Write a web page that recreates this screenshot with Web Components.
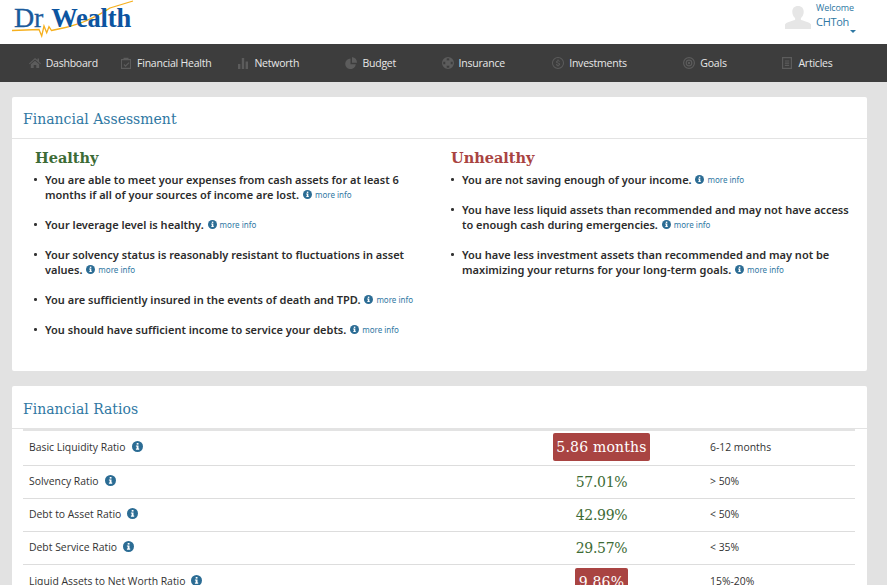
<!DOCTYPE html>
<html>
<head>
<meta charset="utf-8">
<title>Dr Wealth</title>
<style>
    html, body { margin: 0; height: 585px; overflow: hidden; background: #e2e2e2; }
    body { font-family: "Open Sans", "Noto Sans", sans-serif; color: #333; }
</style>
</head>
<body>
<dw-header></dw-header>
<dw-nav>
    <dw-nav-item icon="home">Dashboard</dw-nav-item>
    <dw-nav-item icon="clipboard">Financial Health</dw-nav-item>
    <dw-nav-item icon="bars">Networth</dw-nav-item>
    <dw-nav-item icon="pie">Budget</dw-nav-item>
    <dw-nav-item icon="lifebuoy">Insurance</dw-nav-item>
    <dw-nav-item icon="dollar">Investments</dw-nav-item>
    <dw-nav-item icon="target">Goals</dw-nav-item>
    <dw-nav-item icon="article">Articles</dw-nav-item>
</dw-nav>
<dw-page>
    <dw-card>
        <span slot="title">Financial Assessment</span>
        <dw-assessment>
            <dw-note-list heading="Healthy" tone="good">
                <dw-note>You are able to meet your expenses from cash assets for at least 6 months if all of your sources of income are lost.</dw-note>
                <dw-note>Your leverage level is healthy.</dw-note>
                <dw-note>Your solvency status is reasonably resistant to fluctuations in asset values.</dw-note>
                <dw-note>You are sufficiently insured in the events of death and TPD.</dw-note>
                <dw-note>You should have sufficient income to service your debts.</dw-note>
            </dw-note-list>
            <dw-note-list heading="Unhealthy" tone="bad">
                <dw-note>You are not saving enough of your income.</dw-note>
                <dw-note>You have less liquid assets than recommended and may not have access to enough cash during emergencies.</dw-note>
                <dw-note>You have less investment assets than recommended and may not be maximizing your returns for your long-term goals.</dw-note>
            </dw-note-list>
        </dw-assessment>
    </dw-card>
    <dw-card roomy>
        <span slot="title">Financial Ratios</span>
        <dw-ratio-table>
            <dw-ratio name="Basic Liquidity Ratio" value="5.86 months" range="6-12 months" bad></dw-ratio>
            <dw-ratio name="Solvency Ratio" value="57.01%" range="&gt; 50%"></dw-ratio>
            <dw-ratio name="Debt to Asset Ratio" value="42.99%" range="&lt; 50%"></dw-ratio>
            <dw-ratio name="Debt Service Ratio" value="29.57%" range="&lt; 35%"></dw-ratio>
            <dw-ratio name="Liquid Assets to Net Worth Ratio" value="9.86%" range="15%-20%" bad></dw-ratio>
        </dw-ratio-table>
    </dw-card>
</dw-page>

<script>
const infoIcon = size => `
    <svg width="${size}" height="${size}" viewBox="0 0 11 11" style="display:block">
        <circle cx="5.5" cy="5.5" r="5.5" fill="#2b6c94"/>
        <rect x="4.7" y="2" width="1.8" height="1.6" fill="#fff"/>
        <path d="M3.9 4.4h2.6v3.2h.7v1.1H3.9V7.6h.8V5.5h-.8z" fill="#fff"/>
    </svg>`;

const NAV_ICONS = {
    home: `<path d="M6 1 0 6.4l.7.8L6 2.6l5.300 4.600.7-.8-2-1.800V1.500H8.500v1.400zM1.800 7.300 6 3.700l4.200 3.600V11H7.300V8H4.700v3H1.800z"/>`,
    clipboard: `<path fill-rule="evenodd" d="M1 2h2.500V.8h5V2H11v10H1zm1 1.200v7.600h8V3.200zM8.700 5.300l.8.700-4 3.900-2-2 .8-.8 1.200 1.200z"/>`,
    bars: `<path d="M1 7h2.400v5H1zM4.800 1h2.400v11H4.800zM8.600 4.500H11V12H8.600z"/>`,
    pie: `<path d="M5.500 1.500a5.300 5.300 0 1 0 5.300 5.700H5.500z"/><path d="M7 0v5.700h5A6 6 0 0 0 7 0z"/>`,
    lifebuoy: `<path fill-rule="evenodd" d="M6 0a6 6 0 1 1 0 12A6 6 0 0 1 6 0zM4.700 1.400v2.100a2.800 2.800 0 0 1 2.600 0V1.400a4.800 4.800 0 0 0-2.600 0zM1.400 4.700a4.800 4.800 0 0 0 0 2.600h2.100a2.800 2.800 0 0 1 0-2.600zm7.100 0a2.800 2.800 0 0 1 0 2.600h2.100a4.800 4.800 0 0 0 0-2.600zM4.700 8.500v2.100a4.800 4.800 0 0 0 2.600 0V8.500a2.800 2.800 0 0 1-2.600 0z"/>`,
    dollar: `<path fill-rule="evenodd" d="M6 0a6 6 0 1 1 0 12A6 6 0 0 1 6 0zm0 1a5 5 0 1 0 0 10A5 5 0 0 0 6 1z"/><path d="M5.500 2.500h1v.9c.7.100 1.200.4 1.500.8l-.7.600c-.3-.4-.7-.5-1.200-.5-.6 0-.9.200-.9.600 0 .9 2.900.5 2.900 2.300 0 .8-.6 1.300-1.600 1.500v.9h-1v-.9c-.8-.1-1.400-.5-1.700-1l.8-.6c.3.500.8.700 1.400.7s1-.2 1-.6c0-1-2.900-.5-2.900-2.300 0-.8.600-1.300 1.400-1.500z"/>`,
    target: `<path fill-rule="evenodd" d="M6 0a6 6 0 1 1 0 12A6 6 0 0 1 6 0zm0 1.200a4.800 4.800 0 1 0 0 9.600 4.800 4.800 0 0 0 0-9.600zM6 2.600a3.400 3.400 0 1 1 0 6.800 3.400 3.400 0 0 1 0-6.800zm0 1.200a2.200 2.200 0 1 0 0 4.400 2.200 2.200 0 0 0 0-4.400zM6 4.800a1.200 1.200 0 1 1 0 2.400 1.200 1.200 0 0 1 0-2.400z"/>`,
    article: `<path fill-rule="evenodd" d="M1 0h10v12H1zm1.200 1.200v9.600h7.600V1.200zM3.800 3.400h4.400v1.200H3.800zm0 2.200h4.400v1.200H3.800zm0 2.200h4.400V9H3.800z"/>`
};

class DwHeader extends HTMLElement {
    constructor() {
        super();
        this.root = this.attachShadow({mode: 'open'});
    }
    connectedCallback() {
        this.root.innerHTML = `
            <style>
                :host { display: flex; justify-content: space-between; height: 44px; background: #fff; overflow: hidden; }
                .logo { position: relative; margin-left: 14px; width: 122px; height: 44px; }
                .brand { position: relative; display: block; padding-top: 4px; font: bold 26.5px/28px "Liberation Serif", serif; color: #0c54a0; white-space: nowrap; letter-spacing: -0.2px; }
                .brand b { font-weight: normal; font-size: 28px; color: #1a5a9c; margin-right: 8px; -webkit-text-stroke: 0.3px #1a5a9c; }
                svg.swoosh { position: absolute; left: -14px; top: 0; }
                .user { display: flex; margin-right: 32px; }
                .avatar { margin: 6px 5px 0 0; }
                .who { color: #2f78a3; padding-top: 2px; width: 39px; }
                .welcome { font-size: 9px; line-height: 12px; letter-spacing: -0.1px; }
                .name { font-size: 11px; line-height: 14px; margin-top: 1px; letter-spacing: -0.3px; }
                .caret { width: 0; margin: 1px 0 0 34px; border: 3px solid transparent; border-top: 3px solid #2f78a3; border-bottom: 0; }
            </style>
            <div class="logo">
                <svg class="swoosh" width="136" height="38" viewBox="0 0 136 38">
                    <path d="M12 30.500 39 29.500l2.700 6.500L44 26l2.700 6.700L49 26.700l2.500 3.800Q85 25 110 8l23-7" fill="none" stroke="#f6b01e" stroke-width="1.300"/>
                </svg>
                <span class="brand"><b>Dr</b>Wealth</span>
            </div>
            <div class="user">
                <svg class="avatar" width="26" height="23" viewBox="0 0 25 25" preserveAspectRatio="none">
                    <path d="M12.500 0c3.600 0 5.500 2.600 5.500 6.300 0 3-1.200 5.500-2.700 6.800v2.200c3 1 8 2.200 9.700 4.800V25H0v-4.900c1.700-2.600 6.700-3.800 9.700-4.800v-2.200C8.200 11.800 7 9.300 7 6.300 7 2.600 8.900 0 12.500 0z" fill="#e6e6e6"/>
                </svg>
                <div class="who">
                    <div class="welcome">Welcome</div>
                    <div class="name">CHToh</div>
                    <div class="caret"></div>
                </div>
            </div>
        `;
    }
}

class DwNav extends HTMLElement {
    constructor() {
        super();
        this.root = this.attachShadow({mode: 'open'});
    }
    connectedCallback() {
        this.root.innerHTML = `
            <style>
                :host {
                    display: grid; height: 38px; padding-left: 12px; background: #3d3d3d;
                    grid-template-columns: repeat(5, 102.5px) 130px 101px 103px;
                }
            </style>
            <slot></slot>
        `;
    }
}

class DwNavItem extends HTMLElement {
    constructor() {
        super();
        this.root = this.attachShadow({mode: 'open'});
    }
    connectedCallback() {
        this.root.innerHTML = `
            <style>
                :host { display: flex; align-items: center; justify-content: center; gap: 5px; padding-bottom: 1px; font-size: 10.5px; letter-spacing: -0.22px; color: #e8e8e8; white-space: nowrap; }
                svg { fill: #5c5c5c; }
            </style>
            <svg width="12" height="12" viewBox="0 0 12 12">${NAV_ICONS[this.getAttribute('icon')]}</svg>
            <slot></slot>
        `;
    }
}

class DwPage extends HTMLElement {
    constructor() {
        super();
        this.root = this.attachShadow({mode: 'open'});
    }
    connectedCallback() {
        this.root.innerHTML = `
            <style>
                :host { display: flex; flex-direction: column; gap: 15px; padding: 15px 20px 0 12px; }
            </style>
            <slot></slot>
        `;
    }
}

class DwCard extends HTMLElement {
    constructor() {
        super();
        this.root = this.attachShadow({mode: 'open'});
    }
    connectedCallback() {
        this.root.innerHTML = `
            <style>
                :host { display: block; background: #fff; border-radius: 2px; }
                header {
                    height: 41px; padding-left: 11px; border-bottom: 1px solid #e3e3e3;
                    font: 14px/45px "DejaVu Serif", serif; color: #2f78a3;
                }
                :host([roomy]) header { height: 42px; line-height: 47px; }
            </style>
            <header><slot name="title"></slot></header>
            <slot></slot>
        `;
    }
}

class DwAssessment extends HTMLElement {
    constructor() {
        super();
        this.root = this.attachShadow({mode: 'open'});
    }
    connectedCallback() {
        this.root.innerHTML = `
            <style>
                :host { display: grid; grid-template-columns: 416px 416px; height: 232px; padding: 0 11px; }
            </style>
            <slot></slot>
        `;
    }
}

class DwNoteList extends HTMLElement {
    constructor() {
        super();
        this.root = this.attachShadow({mode: 'open'});
    }
    connectedCallback() {
        const colour = this.getAttribute('tone') == 'good' ? '#3d6b35' : '#a94442';
        this.root.innerHTML = `
            <style>
                :host { display: block; padding: 9px 0 0 12px; }
                :host([tone=good]) ::slotted(dw-note) { margin-left: -1px; }
                h3 { margin: 0 0 4px; font: bold 14.5px/20px "DejaVu Serif", serif; color: ${colour}; }
                .notes { display: flex; flex-direction: column; gap: 15px; }
            </style>
            <h3>${this.getAttribute('heading')}</h3>
            <div class="notes"><slot></slot></div>
        `;
    }
}

class DwNote extends HTMLElement {
    constructor() {
        super();
        this.root = this.attachShadow({mode: 'open'});
    }
    connectedCallback() {
        this.root.innerHTML = `
            <style>
                :host {
                    display: flex; gap: 8.5px;
                    font: 600 11px/15px "Noto Sans", sans-serif; color: #2c2c2c;
                }
                .bullet { flex: none; width: 2.5px; height: 2.5px; margin-top: 6px; border-radius: 50%; background: #333; }
                .icon { display: inline-block; line-height: 0; vertical-align: 0; margin: 0 3px 0 1px; }
                .more { font-size: 8px; line-height: 1; font-weight: 400; color: #2f78a3; position: relative; top: -1px; }
            </style>
            <span class="bullet"></span>
            <span><slot></slot> <span class="icon">${infoIcon(9)}</span><span class="more">more info</span></span>
        `;
    }
}

class DwRatioTable extends HTMLElement {
    constructor() {
        super();
        this.root = this.attachShadow({mode: 'open'});
    }
    connectedCallback() {
        this.root.innerHTML = `
            <style>
                :host { display: block; margin: 0 12px 0 11px; border-top: 2px solid #e3e3e3; }
            </style>
            <slot></slot>
        `;
    }
}

class DwRatio extends HTMLElement {
    constructor() {
        super();
        this.root = this.attachShadow({mode: 'open'});
    }
    connectedCallback() {
        const bad = this.hasAttribute('bad');
        this.root.innerHTML = `
            <style>
                :host {
                    display: grid; grid-template-columns: 476px 205px 151px; align-items: center;
                    height: 32px; border-bottom: 1px solid #ddd; font-size: 10.4px; color: #333;
                }
                :host([bad]) { height: 34px; }
                :host(:first-child) .value { margin-top: -2px; }
                .name { display: flex; align-items: center; gap: 6px; padding-left: 6px; margin-top: -2px; }
                .name svg { margin-top: -2px; }
                .value { justify-self: center; font: 14px/28px "DejaVu Serif", serif; letter-spacing: -0.3px; color: #3d6b35; white-space: nowrap; }
                .value.bad { padding: 0 3.5px; border-radius: 2px; background: #a94442; color: #fff; letter-spacing: 0.2px; }
                .range { padding-left: 6px; margin-top: -2px; }
            </style>
            <div class="name">${this.getAttribute('name')} ${infoIcon(11)}</div>
            <div class="value ${bad ? 'bad' : ''}">${this.getAttribute('value')}</div>
            <div class="range">${this.getAttribute('range').replace('<', '&lt;').replace('>', '&gt;')}</div>
        `;
    }
}

customElements.define('dw-header', DwHeader);
customElements.define('dw-nav', DwNav);
customElements.define('dw-nav-item', DwNavItem);
customElements.define('dw-page', DwPage);
customElements.define('dw-card', DwCard);
customElements.define('dw-assessment', DwAssessment);
customElements.define('dw-note-list', DwNoteList);
customElements.define('dw-note', DwNote);
customElements.define('dw-ratio-table', DwRatioTable);
customElements.define('dw-ratio', DwRatio);
</script>
</body>
</html>
